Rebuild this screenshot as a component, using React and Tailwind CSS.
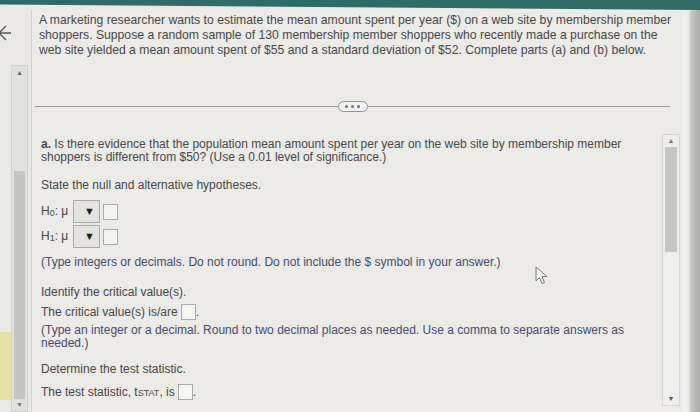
const Sub = ({ children }) => (
  <sub className="text-[9px] relative top-[1px]">{children}</sub>
);

const Dropdown = () => (
  <div className="w-[27px] h-[23px] border border-[#a9a9a9] bg-[#e4e3df] flex items-center justify-end pr-[4px]">
    <span className="text-[11px] leading-none text-[#1e1e1e]">▼</span>
  </div>
);

const Box = ({ className = "" }) => (
  <span
    className={`inline-block w-[15px] h-[16px] border border-[#a8a8a8] bg-[#f4f4f2] align-middle ${className}`}
  />
);

const Hyp = ({ n }) => (
  <div className="flex items-center h-[25px]">
    <span className="w-[32px]">
      H<Sub>{n}</Sub>: μ
    </span>
    <Dropdown />
    <Box className="ml-[3px]" />
  </div>
);

export default function App() {
  return (
    <div className="w-[700px] h-[412px] overflow-hidden bg-[#eae9e5] flex flex-col relative font-['Liberation_Sans',Arial,sans-serif] text-[#474747]">
      <div className="h-[10px] bg-[#2e6d63] [clip-path:polygon(0_0,100%_0,100%_100%,0_45%)]" />

      <div className="flex-1 flex min-h-0">
        {/* left gutter */}
        <div className="w-[31px] shrink-0 flex flex-col">
          <div className="h-[55px] pt-[15px]">
            <svg width="14" height="16" viewBox="0 0 14 16" className="-ml-[2px]">
              <path d="M0 8 H13 M8 1 L1 8 L8 15" stroke="#555" strokeWidth="1.3" fill="none" />
            </svg>
          </div>
          <div className="flex-1 flex">
            <div className="w-[11px] flex flex-col justify-end pb-[12px]">
              <div className="h-[68px] bg-[#e6dfa6]" />
            </div>
            <div className="w-[17px] flex flex-col bg-[#e1e1df] border border-[#d2d2d0]">
              <div className="h-[14px] flex items-center justify-center text-[7px] text-[#666]">▲</div>
              <div className="h-[91px]" />
              <div className="flex-1 mx-[2px] bg-[#c4c4c2]" />
              <div className="h-[12px] flex items-center justify-center text-[7px] text-[#777]">▼</div>
            </div>
          </div>
        </div>

        {/* main */}
        <div className="flex-1 min-w-0 flex flex-col border-l border-[#d3d2ce] bg-[#ecebe7]">
          <div className="pl-[7px] pt-[3px] text-[12.2px] leading-[15px] whitespace-nowrap">
            <div>A marketing researcher wants to estimate the mean amount spent per year ($) on a web site by membership member</div>
            <div>shoppers. Suppose a random sample of 130 membership member shoppers who recently made a purchase on the</div>
            <div>web site yielded a mean amount spent of $55 and a standard deviation of $52. Complete parts (a) and (b) below.</div>
          </div>

          <div className="mt-[42px] ml-[3px] mr-[12px] flex items-center h-[12px]">
            <div className="flex-1 h-px bg-[#9c9c9a]" />
            <div className="w-[30px] h-[11px] rounded-full border border-[#8f8f8d] bg-[#f2f2f0] flex items-center justify-center gap-[3px]">
              <span className="w-[3px] h-[3px] rounded-full bg-[#6b6b9a]" />
              <span className="w-[3px] h-[3px] rounded-full bg-[#6b6b9a]" />
              <span className="w-[3px] h-[3px] rounded-full bg-[#6b6b9a]" />
            </div>
            <div className="flex-1 h-px bg-[#9c9c9a]" />
          </div>

          <div className="flex-1 flex min-h-0">
            <div className="flex-1 min-w-0 pl-[9px] pt-[26px] text-[12px] leading-[13px] whitespace-nowrap">
              <div>
                <b>a.</b> Is there evidence that the population mean amount spent per year on the web site by membership member
              </div>
              <div>shoppers is different from $50? (Use a 0.01 level of significance.)</div>

              <div className="mt-[15px]">State the null and alternative hypotheses.</div>

              <div className="mt-[7px]">
                <Hyp n="0" />
                <Hyp n="1" />
              </div>

              <div className="mt-[7px] text-[#474a72]">
                (Type integers or decimals. Do not round. Do not include the $ symbol in your answer.)
              </div>

              <div className="mt-[17px]">Identify the critical value(s).</div>

              <div className="mt-[5px] flex items-center">
                The critical value(s) is/are <Box className="ml-[3px]" />.
              </div>
              <div className="text-[#474a72] mt-[4px]">
                <div>(Type an integer or a decimal. Round to two decimal places as needed. Use a comma to separate answers as</div>
                <div>needed.)</div>
              </div>

              <div className="mt-[13px]">Determine the test statistic.</div>
              <div className="mt-[8px] flex items-center">
                The test statistic, t<Sub>STAT</Sub>, is <Box className="ml-[3px]" />.
              </div>
            </div>

            {/* right scrollbar */}
            <div className="w-[18px] shrink-0 mt-[22px] mb-[6px] flex flex-col bg-[#eeeeec] border border-[#d6d6d4]">
              <div className="h-[12px] flex items-center justify-center text-[7px] text-[#777]">▲</div>
              <div className="h-[105px] mx-[2px] bg-[#c6c6c4]" />
              <div className="flex-1" />
              <div className="h-[12px] flex items-center justify-center text-[7px] text-[#555]">▼</div>
            </div>
            <div className="w-[2px] shrink-0" />
          </div>
        </div>

        {/* bezel */}
        <div className="w-[18px] shrink-0 bg-[linear-gradient(to_right,#f1f1ef_0%,#eeeeec_35%,#c9c9c7_50%,#a9a9a7_100%)]" />
      </div>

      {/* mouse cursor */}
      <svg width="14" height="20" viewBox="0 0 14 20" className="absolute left-[535px] top-[266px]">
        <path d="M1 1 L1 15 L4.5 11.5 L7 17.5 L9.5 16.5 L7 10.5 L12 10.5 Z" fill="#f4f4f4" stroke="#777" strokeWidth="1" />
      </svg>
    </div>
  );
}
